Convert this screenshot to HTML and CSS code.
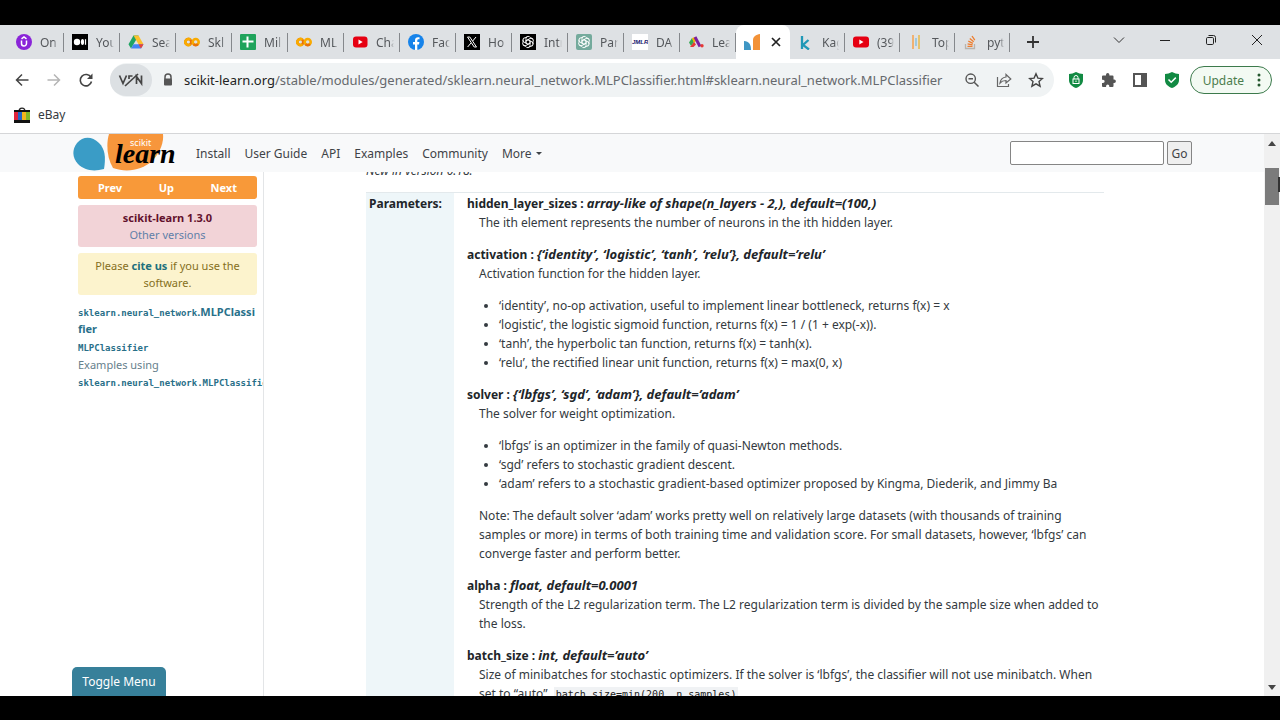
FILE: index.html
```html
<!DOCTYPE html>
<html lang="en">
<head>
    <meta charset="UTF-8">
    <meta name="viewport" content="width=device-width, initial-scale=1.0">
    <title>sklearn.neural_network.MLPClassifier</title>
    <link rel="stylesheet" href="styles.css">
</head>
<body>
    <header class="browser">
        <div class="tab-strip">
            <button class="tab"><svg viewBox="0 0 16 16"><circle cx="8" cy="8" r="8" fill="#8a24d8"/><path d="M5.500 6.500v3a2.500 2.500 0 0 0 5 0v-3M5.500 4.800 8 3l2.500 1.800" fill="none" stroke="#fff" stroke-width="1.500"/></svg><span>On</span></button>
            <button class="tab"><svg viewBox="0 0 16 16"><path d="M0 0h16v16H0z"/><circle cx="5" cy="8" r="3.200" fill="#fff"/><ellipse cx="10.500" cy="8" rx="1.600" ry="3" fill="#fff"/><path d="M13.500 5.200v5.600" stroke="#fff" stroke-width="1.200"/></svg><span>You</span></button>
            <button class="tab"><svg viewBox="0 0 16 16"><path d="M5.500 1.500h5L8 6 3 14.500.500 10.200z" fill="#1fa463"/><path d="M5.500 1.500h5l5 8.700h-5z" fill="#fbc02d"/><path d="M5.500 10.200h10L13 14.500H3z" fill="#4285f4"/><path d="m15.500 10.200-2.500 4.300-2.500-4.300z" fill="#ea4335"/></svg><span>Sea</span></button>
            <button class="tab"><svg viewBox="0 0 16 16"><g fill="none" stroke-width="2.600"><circle cx="4.300" cy="8" r="3" stroke="#e8710a"/><path d="M6.500 5.800A3 3 0 1 0 6.500 10.200" stroke="#f9ab00"/><circle cx="11.700" cy="8" r="3" stroke="#f9ab00"/><path d="M9.500 10.200a3 3 0 0 0 4.400 0" stroke="#e8710a"/></g></svg><span>Skl</span></button>
            <button class="tab"><svg viewBox="0 0 16 16"><rect width="16" height="16" rx="1" fill="#1fa35b"/><path d="M7.500 2.500v11M2.500 7.500h11" stroke="#fff" stroke-width="2"/></svg><span>Mil</span></button>
            <button class="tab"><svg viewBox="0 0 16 16"><g fill="none" stroke-width="2.600"><circle cx="4.300" cy="8" r="3" stroke="#e8710a"/><path d="M6.500 5.800A3 3 0 1 0 6.500 10.200" stroke="#f9ab00"/><circle cx="11.700" cy="8" r="3" stroke="#f9ab00"/><path d="M9.500 10.200a3 3 0 0 0 4.400 0" stroke="#e8710a"/></g></svg><span>ML</span></button>
            <button class="tab"><svg viewBox="0 0 16 16"><rect x="1" y="2.500" width="14.500" height="11" rx="3" fill="#e60012"/><path d="m6.500 5.600 4.200 2.400-4.200 2.400z" fill="#fff"/></svg><span>Cha</span></button>
            <button class="tab"><svg viewBox="0 0 16 16"><circle cx="8" cy="8" r="8" fill="#1683ea"/><path d="M7 16v-5.500H5V8h2V6.300C7 4.200 8.200 3.200 10 3.200c.800 0 1.500.100 1.500.100v2h-1c-.900 0-1.200.600-1.200 1.200V8h2.100l-.400 2.500H9.300V16z" fill="#fff"/></svg><span>Fac</span></button>
            <button class="tab"><svg viewBox="0 0 16 16"><path d="M0 0h16v16H0z"/><path d="M3.500 3h2.300l6.700 10h-2.300zM12 3 8.700 7M7 9l-3.400 4" fill="none" stroke="#fff"/></svg><span>Ho</span></button>
            <button class="tab"><svg viewBox="0 0 16 16"><path d="M0 0h16v16H0z"/><g fill="none" stroke="#fff" stroke-width=".900"><path id="knot" d="M6 4.200a2.300 2.300 0 0 1 4.300-.600l2.100 1.200M6 4.200v5l2 1.200"/><use href="#knot" transform="rotate(60 8 8)"/><use href="#knot" transform="rotate(120 8 8)"/><use href="#knot" transform="rotate(180 8 8)"/><use href="#knot" transform="rotate(240 8 8)"/><use href="#knot" transform="rotate(300 8 8)"/></g></svg><span>Intr</span></button>
            <button class="tab"><svg viewBox="0 0 16 16"><rect width="16" height="16" rx="2" fill="#74aa9c"/><g fill="none" stroke="#fff" stroke-width=".900"><use href="#knot"/><use href="#knot" transform="rotate(60 8 8)"/><use href="#knot" transform="rotate(120 8 8)"/><use href="#knot" transform="rotate(180 8 8)"/><use href="#knot" transform="rotate(240 8 8)"/><use href="#knot" transform="rotate(300 8 8)"/></g></svg><span>Par</span></button>
            <button class="tab"><svg viewBox="0 0 16 16"><path d="M0 0h16v16H0z" fill="#fff"/><text x="0" y="10" class="jmlr">JMLR</text></svg><span>DA</span></button>
            <button class="tab"><svg viewBox="0 0 16 16"><path d="M1 8.500 4 4l2 4-3 4z" fill="#35a853"/><path d="m4 4 3.500-1L9 6 6 9z" fill="#f4b400"/><path d="m7 3 5 9.500" stroke="#7b1fa2" stroke-width="3"/><path d="m2 13 4-5 2 2.500L5.500 13z" fill="#e53935"/><circle cx="14" cy="11.800" r="1.700" fill="#e53935"/></svg><span>Lea</span></button>
            <button class="tab active" aria-label="scikit-learn"><svg viewBox="0 0 16 16"><path d="M0 7c5 0 7 3.500 7 9H0z" fill="#3f96c4"/><path d="M9 16V6c0-3.500 3-5.500 7-6v16z" fill="#f39237"/></svg><svg viewBox="0 0 16 16"><path d="m4 4 8 8m0-8-8 8" fill="none" stroke="#222" stroke-width="1.700"/></svg></button>
            <button class="tab"><svg viewBox="0 0 16 16"><path d="M4 2v13M10.500 6 5 11l6 4.500" fill="none" stroke="#2098b6" stroke-width="2.300"/></svg><span>Kag</span></button>
            <button class="tab"><svg viewBox="0 0 16 16"><rect y="2.500" width="16" height="11" rx="3" fill="#e60012"/><path d="m6.300 5.600 4.200 2.400-4.200 2.400z" fill="#fff"/></svg><span>(39</span></button>
            <button class="tab"><svg viewBox="0 0 16 16"><path d="M5 1v14" stroke="#f6a04d" stroke-width="1.500"/><path d="M8 4v8" stroke="#8bc0dd" stroke-width="1.500"/><path d="M11 1v14" stroke="#e9b949" stroke-width="1.500"/></svg><span>Top</span></button>
            <button class="tab"><svg viewBox="0 0 16 16"><path d="M2.500 10v4.500h9V10" fill="none" stroke="#b9b3ac" stroke-width="1.300"/><path d="M4.500 12.300h5M4.600 9.800l5 1M5.300 7.200l4.600 2.200M6.800 4.500l3.900 3.300M9 2l2.800 4.200" stroke="#ee7d2e" stroke-width="1.300"/></svg><span>pyt</span></button>
            <button class="new-tab" aria-label="New tab"><svg viewBox="0 0 16 16"><path d="M8 2v12M2 8h12" stroke="#333" stroke-width="1.800"/></svg></button>
            <div class="window-buttons">
                <button aria-label="Search tabs"><svg viewBox="0 0 16 16"><path d="m3 5.500 5 5 5-5" fill="none" stroke="#333"/></svg></button>
                <button aria-label="Minimize"><svg viewBox="0 0 16 16"><path d="M3 8.500h10" stroke="#222"/></svg></button>
                <button aria-label="Restore"><svg viewBox="0 0 16 16"><path d="M5.500 3.500h5a2 2 0 0 1 2 2v5" fill="none" stroke="#222"/><rect x="3.500" y="5.500" width="7" height="7" rx="1.200" fill="none" stroke="#222"/></svg></button>
                <button aria-label="Close"><svg viewBox="0 0 16 16"><path d="m3 3 10 10m0-10L3 13" stroke="#222"/></svg></button>
            </div>
        </div>

        <div class="toolbar">
            <button aria-label="Back"><svg viewBox="0 0 16 16"><path d="M14.500 8H2.500M8 2.500 2.500 8 8 13.500" fill="none" stroke="#444" stroke-width="1.500"/></svg></button>
            <button aria-label="Forward"><svg viewBox="0 0 16 16"><path d="M1.500 8h12M8 2.500 13.500 8 8 13.500" fill="none" stroke="#b5b5b5" stroke-width="1.500"/></svg></button>
            <button aria-label="Reload"><svg viewBox="0 0 16 16"><path d="M13 5.500A5.700 5.700 0 1 0 13.500 9.500" fill="none" stroke="#444" stroke-width="1.600"/><path d="M14.500 1.500v5.500H9z" fill="#444"/></svg></button>
            <div class="address">
                <button class="vpn" aria-label="VPN"><svg viewBox="0 0 26 16"><path d="m1.500 3.500 3.500 8 3.500-8M11 7V4h3.500M18.500 12V4.500l5 7V3.500" fill="none" stroke="#444" stroke-width="1.700"/><path d="M7 14 20 2" stroke="#444" stroke-width="1.700"/></svg></button>
                <svg class="lock" viewBox="0 0 16 16"><path d="M5 7V5a3 3 0 0 1 6 0v2" fill="none" stroke="#555" stroke-width="1.500"/><rect x="4" y="6.500" width="8" height="7" rx="1" fill="#555"/></svg>
                <a class="url" href="#MLPClassifier"><b>scikit-learn.org</b>/stable/modules/generated/sklearn.neural_network.MLPClassifier.html#sklearn.neural_network.MLPClassifier</a>
                <button aria-label="Zoom"><svg viewBox="0 0 16 16"><circle cx="6.700" cy="6.700" r="4.700" fill="none" stroke="#555" stroke-width="1.400"/><path d="M4.500 6.700H9M10.200 10.200l4.300 4.300" stroke="#555" stroke-width="1.500"/></svg></button>
                <button aria-label="Share"><svg viewBox="0 0 16 16"><path d="M1.500 5v9.500h11V12" fill="none" stroke="#666" stroke-width="1.200"/><path d="M10 2.500 14.800 7 10 11V8.500c-2.500 0-4.500.700-6 2.500.500-3.500 2.500-5.500 6-6z" fill="none" stroke="#666" stroke-width="1.200"/></svg></button>
                <button aria-label="Bookmark"><svg viewBox="0 0 16 16"><path d="m8 1.800 1.900 4.300 4.600.400L11 9.600l1.100 4.600L8 11.800l-4.100 2.400L5 9.600 1.500 6.500l4.600-.400z" fill="none" stroke="#444" stroke-width="1.400"/></svg></button>
            </div>
            <div class="extensions">
                <button aria-label="Adblock"><svg viewBox="0 0 16 16"><path d="M8 0C5.500 1.300 3.500 1.800 1 2v6c0 4 3 6.500 7 8 4-1.500 7-4 7-8V2c-2.500-.200-4.500-.700-7-2z" fill="#128a43"/><rect x="5" y="7" width="6" height="4.500" fill="none" stroke="#fff"/><path d="M6 7V5.500a2 2 0 0 1 4 0V7M8 8.500v1.500" fill="none" stroke="#fff"/></svg></button>
                <button aria-label="Extensions"><svg viewBox="0 0 16 16"><path d="M6 2.700a1.700 1.700 0 0 1 3.400 0V3.500h3.100a1 1 0 0 1 1 1v3h.700a1.700 1.700 0 0 1 0 3.400h-.700v3.100a1 1 0 0 1-1 1H9.300v-1a1.600 1.600 0 0 0-3.200 0v1H3a1 1 0 0 1-1-1v-3h1a1.600 1.600 0 0 0 0-3.300H2V4.500a1 1 0 0 1 1-1h3z" fill="#555"/></svg></button>
                <button aria-label="Side panel"><svg viewBox="0 0 16 16"><path d="M1 1h14v14H1zM3 3v10h6V3z" fill="#555" fill-rule="evenodd"/></svg></button>
                <button aria-label="Security"><svg viewBox="0 0 16 16"><path d="M8 0C5.500 1.300 3.500 1.800 1 2v6c0 4 3 6.500 7 8 4-1.500 7-4 7-8V2c-2.500-.200-4.500-.700-7-2z" fill="#128a43"/><path d="m4.500 7.500 2.700 2.700 4.600-4.600" fill="none" stroke="#fff" stroke-width="1.500"/></svg></button>
            </div>
            <button class="update">Update <svg viewBox="0 0 16 16"><circle cx="8" cy="3" r="1.500"/><circle cx="8" cy="8" r="1.500"/><circle cx="8" cy="13" r="1.500"/></svg></button>
        </div>

        <div class="bookmarks">
            <a href="#ebay"><svg viewBox="0 0 16 16"><path d="M5 4.500C5 0 11 0 11 4.500" fill="none" stroke="#222" stroke-width="1.200"/><path d="M0 3h16v13H0z" fill="#111"/><path d="M0 5h4v8H0z" fill="#e0243c"/><path d="M4 5h4v8H4z" fill="#2465c7"/><path d="M8 5h4v8H8z" fill="#f2b51d"/><path d="M12 5h4v8h-4z" fill="#80b728"/></svg>eBay</a>
        </div>
    </header>

    <div class="viewport">
        <div class="page">
            <nav class="navbar">
                <a class="logo" href="#home" aria-label="scikit-learn">
                    <svg viewBox="0 0 106 38">
                        <path d="M5 9C11 2 20 2 27 9c6 6 7 14 5 26-11 3-20 1-26-5C0 24 0 15 5 9z" fill="#3a9cc6"/>
                        <path d="M37 0h54c1 10-4 20-11 27-10 9-25 12-39 7C35 24 34 10 37 0z" fill="#f7963c"/>
                        <text x="58" y="12" class="logo-small">scikit</text>
                        <text x="43" y="29" class="logo-big">learn</text>
                    </svg>
                </a>
                <a href="#install">Install</a>
                <a href="#guide">User Guide</a>
                <a href="#api">API</a>
                <a href="#examples">Examples</a>
                <a href="#community">Community</a>
                <a class="more" href="#more">More</a>
                <form class="search">
                    <input type="text" aria-label="Search">
                    <button type="button">Go</button>
                </form>
            </nav>

            <div class="columns">
                <aside class="sidebar">
                    <div class="pager"><a href="#prev">Prev</a><a href="#up">Up</a><a href="#next">Next</a></div>
                    <div class="box version"><strong>scikit-learn 1.3.0</strong><br><a href="#versions">Other versions</a></div>
                    <div class="box cite">Please <a href="#cite">cite us</a> if you use the software.</div>
                    <ul class="toc">
                        <li class="title"><a href="#module"><code>sklearn.neural_network</code>.MLPClassifier</a></li>
                        <li><a href="#MLPClassifier"><code>MLPClassifier</code></a></li>
                        <li class="long"><a href="#using">Examples using<br><code>sklearn.neural_network.MLPClassifier</code></a></li>
                    </ul>
                    <button class="toggle-menu">Toggle Menu</button>
                </aside>

                <main class="content">
                    <p class="version-added">New in version 0.18.</p>
                    <dl class="field-list">
                        <dt>Parameters:</dt>
                        <dd>
                            <dl class="params">
                                <dt>hidden_layer_sizes : <em>array-like of shape(n_layers - 2,), default=(100,)</em></dt>
                                <dd><p>The ith element represents the number of neurons in the ith hidden layer.</p></dd>

                                <dt>activation : <em>{‘identity’, ‘logistic’, ‘tanh’, ‘relu’}, default=’relu’</em></dt>
                                <dd>
                                    <p>Activation function for the hidden layer.</p>
                                    <ul>
                                        <li>‘identity’, no-op activation, useful to implement linear bottleneck, returns f(x) = x</li>
                                        <li>‘logistic’, the logistic sigmoid function, returns f(x) = 1 / (1 + exp(-x)).</li>
                                        <li>‘tanh’, the hyperbolic tan function, returns f(x) = tanh(x).</li>
                                        <li>‘relu’, the rectified linear unit function, returns f(x) = max(0, x)</li>
                                    </ul>
                                </dd>

                                <dt>solver : <em>{‘lbfgs’, ‘sgd’, ‘adam’}, default=’adam’</em></dt>
                                <dd>
                                    <p>The solver for weight optimization.</p>
                                    <ul>
                                        <li>‘lbfgs’ is an optimizer in the family of quasi-Newton methods.</li>
                                        <li>‘sgd’ refers to stochastic gradient descent.</li>
                                        <li>‘adam’ refers to a stochastic gradient-based optimizer proposed by Kingma, Diederik, and Jimmy Ba</li>
                                    </ul>
                                    <p>Note: The default solver ‘adam’ works pretty well on relatively large datasets (with thousands of training samples or more) in terms of both training time and validation score. For small datasets, however, ‘lbfgs’ can converge faster and perform better.</p>
                                </dd>

                                <dt>alpha : <em>float, default=0.0001</em></dt>
                                <dd><p>Strength of the L2 regularization term. The L2 regularization term is divided by the sample size when added to the loss.</p></dd>

                                <dt>batch_size : <em>int, default=’auto’</em></dt>
                                <dd><p>Size of minibatches for stochastic optimizers. If the solver is ‘lbfgs’, the classifier will not use minibatch. When set to “auto”, <code>batch_size=min(200, n_samples)</code>.</p></dd>
                            </dl>
                        </dd>
                    </dl>
                </main>
            </div>
        </div>

        <div class="scrollbar">
            <span class="arrow up"></span>
            <span class="thumb"></span>
            <span class="arrow down"></span>
        </div>
    </div>
</body>
</html>
```
FILE: styles.css
```css
* {
    box-sizing: border-box;
}

body {
    display: flex;
    flex-direction: column;
    height: 100vh;
    margin: 0;
    padding: 25px 0 24px;
    overflow: hidden;
    background: #000;
    color: #343a40;
    font-family: "Noto Sans", "Open Sans", sans-serif;
    font-size: 12px;
    line-height: 19px;
}

a {
    color: inherit;
    text-decoration: none;
}

button {
    padding: 0;
    border: none;
    background: none;
    font: inherit;
    color: inherit;
}

svg {
    display: block;
    flex: none;
    width: 16px;
    height: 16px;
}

/* browser chrome */
.browser {
    flex: none;
    background: #fff;
    border-bottom: 1px solid #d5d6d8;
}

.tab-strip {
    display: flex;
    align-items: center;
    height: 34px;
    padding-left: 8px;
    background: #dee1e4;
}

.tab {
    position: relative;
    display: flex;
    align-items: center;
    flex: none;
    gap: 8px;
    width: 56px;
    height: 34px;
    padding: 0 6px 0 8px;
    color: #55585c;
}

.tab::after {
    content: "";
    position: absolute;
    top: 8px;
    right: 0;
    width: 1px;
    height: 19px;
    background: #85888c;
}

.tab span {
    flex: 1;
    overflow: hidden;
    white-space: nowrap;
    text-align: left;
    -webkit-mask-image: linear-gradient(90deg, #000 75%, transparent);
    mask-image: linear-gradient(90deg, #000 75%, transparent);
}

.tab.active {
    width: 54px;
    background: #fff;
    border-radius: 8px 8px 0 0;
}

.tab.active::after {
    display: none;
}

.tab.active ~ .tab {
    width: 55px;
}

.jmlr {
    font: italic bold 6px "Liberation Sans", sans-serif;
    fill: #16166e;
}

.new-tab {
    margin-left: 15px;
}

.window-buttons {
    display: flex;
    gap: 30px;
    margin-left: auto;
    padding: 0 15px 4px 0;
}

.toolbar {
    display: flex;
    align-items: center;
    gap: 16px;
    height: 42px;
    padding: 0 8px 0 14px;
}

.address {
    display: flex;
    align-items: center;
    flex: 1;
    gap: 16px;
    min-width: 0;
    height: 34px;
    padding-right: 10px;
    border-radius: 17px;
    background: #f0f3f4;
}

.vpn {
    padding: 8px;
    border-radius: 17px;
    background: #dce0e3;
}

.vpn svg {
    width: 26px;
}

.lock {
    margin: 0 -8px;
}

.url {
    flex: 1;
    overflow: hidden;
    white-space: nowrap;
    font-size: 13px;
    color: #66696d;
}

.url b {
    font-weight: normal;
    color: #222;
}

.extensions {
    display: flex;
    gap: 16px;
    margin: 0 -6px 0 -2px;
}

.update {
    display: flex;
    align-items: center;
    gap: 7px;
    height: 28px;
    padding: 0 4px 0 12px;
    border: 1px solid #3c7a4c;
    border-radius: 14px;
    background: #f3faf3;
    color: #4b7d4d;
}

.update svg {
    fill: #25582f;
}

.bookmarks {
    height: 32px;
    padding: 4px 14px;
}

.bookmarks a {
    display: flex;
    align-items: center;
    gap: 8px;
    width: max-content;
}

/* page */
.viewport {
    display: flex;
    flex: 1;
    min-height: 0;
    background: #fff;
}

.page {
    display: flex;
    flex-direction: column;
    flex: 1;
    min-width: 0;
}

.navbar {
    display: flex;
    align-items: center;
    flex: none;
    gap: 14px;
    height: 38px;
    padding: 0 72px;
    background: #f8f9fa;
    color: #3f4347;
}

.logo {
    margin-right: 4px;
}

.logo svg {
    width: 106px;
    height: 38px;
}

.logo-small {
    font-size: 9px;
    fill: #fff;
}

.logo-big {
    font: italic bold 28px "Liberation Serif", serif;
    fill: #000;
}

.more::after {
    content: "";
    display: inline-block;
    margin-left: 4px;
    border: 3px solid transparent;
    border-top-color: currentColor;
    border-bottom: none;
    vertical-align: 3px;
}

.search {
    display: flex;
    gap: 3px;
    margin-left: auto;
}

.search input {
    width: 154px;
    height: 24px;
    border: 1px solid #858585;
    border-radius: 2px;
    background: #fff;
}

.search button {
    width: 25px;
    height: 24px;
    border: 1px solid #858585;
    border-radius: 2px;
    background: #efefef;
}

.columns {
    display: flex;
    flex: 1;
    min-height: 0;
    overflow: hidden;
}

.sidebar {
    display: flex;
    flex-direction: column;
    flex: none;
    width: 264px;
    padding: 4px 0 0 78px;
    overflow: hidden;
    border-right: 1px solid #e3e5e7;
    font-size: 11px;
    line-height: 17px;
}

.pager,
.box {
    margin: 0 6px 6px 0;
    border-radius: 3px;
}

.pager {
    display: flex;
    justify-content: space-between;
    padding: 3px 20px;
    background: #f89939;
    color: #fff;
    font-weight: bold;
}

.box {
    padding: 4px 8px;
    text-align: center;
}

.version {
    background: #f2d3d7;
    color: #721c24;
}

.version strong {
    color: #62102c;
}

.version a {
    color: #5f7fa8;
}

.cite {
    background: #fcf3cd;
    color: #856f1c;
}

.cite a {
    color: #216f7c;
    font-weight: bold;
}

.toc {
    margin: 0;
    padding: 2px 0 0;
    list-style: none;
    color: #28708a;
}

.toc li {
    margin-bottom: 1px;
}

.toc .title {
    margin-right: 6px;
    font-weight: bold;
    word-break: break-all;
}

.toc .long {
    white-space: nowrap;
    color: #66808c;
}

.toc code {
    font: bold 9px "DejaVu Sans Mono", monospace;
    color: #286f88;
}

.toggle-menu {
    width: 94px;
    height: 29px;
    margin: auto 0 0 -6px;
    border-radius: 5px 5px 0 0;
    background: #37809a;
    color: #fff;
    font-size: 12px;
}

.content {
    flex: 1;
    min-width: 0;
    margin-top: -11px;
    padding: 0 160px 0 102px;
}

.content p,
.content ul,
.content dl,
.content dd {
    margin: 0;
}

.version-added {
    font-style: italic;
}

.content .field-list {
    display: flex;
    margin-top: 12px;
    border-top: 1px solid #e3e9ec;
}

.field-list > dt {
    flex: none;
    width: 88px;
    padding: 1px 3px;
    background: #eef6f9;
    color: #212529;
    font-weight: bold;
}

.field-list > dd {
    flex: 1;
    padding: 1px 0 0 13px;
}

.params dt {
    color: #212529;
    font-weight: bold;
}

.params em {
    font-size: 13px;
    line-height: 1;
}

.content .params dd {
    margin: 0 0 13px 12px;
}

.params ul {
    padding-left: 20px;
}

.content .params dd > * + * {
    margin-top: 13px;
}

.content code {
    padding: 2px;
    background: #f0f2f4;
    color: #222;
    font: 10px "DejaVu Sans Mono", monospace;
}

/* scrollbar */
.scrollbar {
    display: flex;
    flex-direction: column;
    align-items: center;
    width: 16px;
    padding: 7px 0 6px;
    background: #f0f0f0;
}

.arrow {
    border: 4px solid transparent;
}

.arrow.up {
    border-top: none;
    border-bottom: 5px solid #444;
}

.arrow.down {
    margin-top: auto;
    border-bottom: none;
    border-top: 5px solid #444;
}

.thumb {
    position: relative;
    width: 14px;
    height: 37px;
    margin-top: 22px;
    background: #7b7b7b;
}

/* mouse pointer at the window edge */
.thumb::after {
    content: "";
    position: absolute;
    top: 9px;
    right: -1px;
    width: 2px;
    height: 15px;
    background: #333;
}
```
